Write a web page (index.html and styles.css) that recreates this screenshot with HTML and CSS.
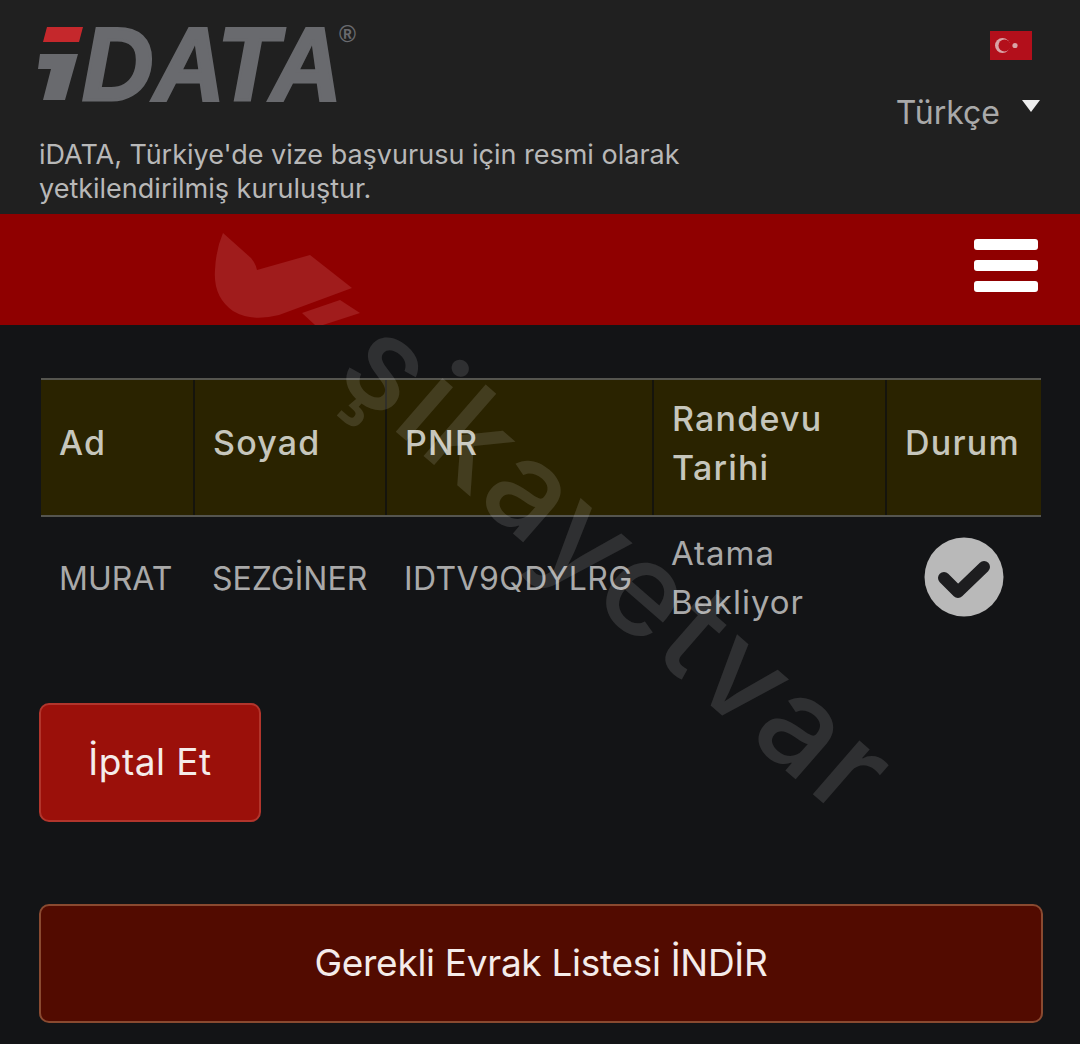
FILE: index.html
```html
<!DOCTYPE html>
<html lang="tr">
<head>
    <meta charset="UTF-8">
    <meta name="viewport" content="width=device-width, initial-scale=1.0">
    <title>iDATA</title>
    <link rel="stylesheet" href="styles.css">
</head>
<body>
    <header class="top-bar">
        <div class="brand">
            <svg class="logo" width="340" height="120" viewBox="0 -22 340 120">
                <polygon points="9,1 45,1 41,16 5,16" fill="#c5282c"/>
                <polygon points="2,28 40,28 27,74 5,74 13,43 0,43" fill="#696a6e"/>
                <text class="logo-text" x="44" y="74" textLength="260" lengthAdjust="spacingAndGlyphs">DATA</text>
                <text class="logo-mark" x="301" y="16">®</text>
            </svg>
            <p class="tagline">iDATA, Türkiye'de vize başvurusu için resmi olarak yetkilendirilmiş kuruluştur.</p>
        </div>
        <div class="lang">
            <svg class="flag" width="42" height="29" viewBox="0 0 42 29">
                <rect width="42" height="29" fill="#b30f1b"/>
                <circle cx="12.5" cy="14.5" r="7.5" fill="#d9a3a6"/>
                <circle cx="14.5" cy="14.5" r="6" fill="#b30f1b"/>
                <circle cx="25" cy="14.5" r="2.6" fill="#d9a3a6"/>
            </svg>
            <div class="lang-select">
                <span>Türkçe</span>
                <span class="caret"></span>
            </div>
        </div>
    </header>

    <nav class="nav-bar">
        <svg class="nav-bird" width="150" height="94" viewBox="0 0 150 94">
            <path d="M12 2 L40 27 Q45 33 46 39 L99 24 L141 57 L68 84 Q40 91 22 80 Q2 66 4 39 Q5 18 12 2 Z" fill="#a01c1c"/>
            <path d="M91 82 L129 69 L149 82 L112 94 L104 94 Z" fill="#a01c1c"/>
        </svg>
        <div class="menu-btn">
            <span></span>
            <span></span>
            <span></span>
        </div>
    </nav>

    <main class="content">
        <table class="status-table">
            <thead>
                <tr>
                    <th class="col-name">Ad</th>
                    <th class="col-surname">Soyad</th>
                    <th class="col-pnr">PNR</th>
                    <th class="col-date">Randevu Tarihi</th>
                    <th class="col-status">Durum</th>
                </tr>
            </thead>
            <tbody>
                <tr>
                    <td>MURAT</td>
                    <td>SEZGİNER</td>
                    <td class="cell-pnr">IDTV9QDYLRG</td>
                    <td class="cell-state">Atama Bekliyor</td>
                    <td class="status-cell">
                        <svg width="80" height="80" viewBox="0 0 80 80">
                            <circle cx="40" cy="40" r="39.5" fill="#b9b9b9"/>
                            <path d="M20 41 L34 55 L60 30" fill="none" stroke="#1d1d1f" stroke-width="12" stroke-linecap="round" stroke-linejoin="round"/>
                        </svg>
                    </td>
                </tr>
            </tbody>
        </table>

        <a class="btn btn-cancel">İptal Et</a>
        <a class="btn btn-download">Gerekli Evrak Listesi İNDİR</a>
    </main>

    <div class="watermark">şikayetvar</div>
</body>
</html>
```

FILE: styles.css
```css
/* page */
body {
    font-family: "Inter", "Noto Sans", sans-serif;
    background: #131416;
    margin: 0;
    padding: 0;
    height: 1044px;
    overflow: hidden;
    position: relative;
    color: #bbb;
}

/* header */
.top-bar {
    background: #202020;
    height: 214px;
    box-sizing: border-box;
    padding: 26px 40px 0 38px;
    display: flex;
    justify-content: space-between;
}

.logo {
    display: block;
    margin: -22px 0 -14px;
}

.logo-text {
    font-family: "Liberation Sans", sans-serif;
    font-weight: bold;
    font-style: italic;
    font-size: 103px;
    fill: #696a6e;
    stroke: #696a6e;
    stroke-width: 3px;
}

.logo-mark {
    font-family: "Liberation Sans", sans-serif;
    font-weight: bold;
    font-size: 23px;
    fill: #696a6e;
}

.tagline {
    margin: 28px 0 0 1px;
    width: 680px;
    font-size: 27px;
    line-height: 34px;
    color: #b8b8b8;
}

.lang {
    display: flex;
    flex-direction: column;
    align-items: flex-end;
}

.flag {
    display: block;
    margin: 5px 8px 0 0;
}

.lang-select {
    display: flex;
    gap: 22px;
    margin-top: 33px;
    font-size: 32px;
    line-height: 40px;
    color: #a9a9a9;
}

.caret {
    width: 0;
    height: 0;
    margin-top: 7px;
    border-left: 9px solid transparent;
    border-right: 9px solid transparent;
    border-top: 12px solid #eee;
}

/* red nav */
.nav-bar {
    background: #8f0000;
    height: 111px;
    box-sizing: border-box;
    padding: 25px 42px 0 0;
    display: flex;
    justify-content: flex-end;
    position: relative;
    overflow: hidden;
}

.nav-bird {
    position: absolute;
    left: 211px;
    top: 17px;
}

.menu-btn {
    display: flex;
    flex-direction: column;
    gap: 10px;
    width: 64px;
}

.menu-btn span {
    height: 11px;
    background: #fff;
    border-radius: 3px;
}

/* table */
.content {
    padding: 54px 37px 0 39px;
}

.status-table {
    width: 1000px;
    margin-top: -1px;
    margin-left: 2px;
    border-collapse: collapse;
    table-layout: fixed;
}

.status-table th {
    background: #2a2300;
    height: 137px;
    box-sizing: border-box;
    padding: 0 18px 10px;
    text-align: left;
    font-size: 34px;
    font-weight: 500;
    letter-spacing: 1.2px;
    line-height: 49px;
    color: #c6c6bc;
    border-top: 2px solid #55554f;
    border-bottom: 2px solid #55554f;
    border-left: 2px solid #15140c;
}

.status-table th:first-child {
    border-left: none;
}

.status-table td {
    height: 120px;
    padding: 0 18px;
    font-size: 32px;
    line-height: 49px;
    color: #a9a9a9;
}

.status-table .cell-pnr {
    letter-spacing: 0.4px;
}

.status-table .cell-state {
    font-size: 33px;
    letter-spacing: 1px;
}

.col-name { width: 153px; }
.col-surname { width: 192px; }
.col-pnr { width: 267px; }
.col-date { width: 233px; }
.col-status { width: 155px; }

.status-table .status-cell {
    padding: 0 0 2px;
}

.status-cell svg {
    display: block;
    margin: 0 auto;
}

/* buttons */
.btn {
    display: flex;
    align-items: center;
    justify-content: center;
    box-sizing: border-box;
    height: 119px;
    padding-bottom: 3px;
    border-radius: 10px;
    font-size: 37px;
    color: #f5ecea;
}

.btn-cancel {
    width: 222px;
    margin-top: 64px;
    letter-spacing: 0.5px;
    background: #9b100a;
    border: 2px solid #b2352c;
}

.btn-download {
    width: 1004px;
    margin-top: 82px;
    letter-spacing: -0.3px;
    background: #520b00;
    border: 2px solid #8a4a30;
}

/* site stamp over the screenshot */
.watermark {
    position: absolute;
    left: 333px;
    top: 265px;
    font-size: 130px;
    font-weight: 500;
    letter-spacing: 4px;
    line-height: 1;
    color: rgba(255, 255, 255, 0.12);
    transform-origin: 0 112px;
    transform: rotate(41deg);
    pointer-events: none;
    white-space: nowrap;
}
```
